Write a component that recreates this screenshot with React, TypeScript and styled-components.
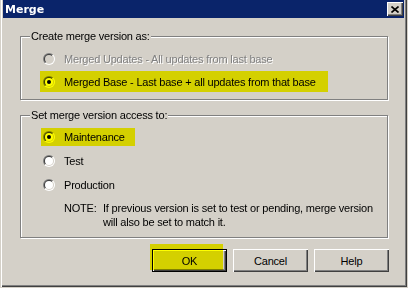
import React from 'react';
import styled, { createGlobalStyle } from 'styled-components';

const face = '#d4d0c8';
const shadow = '#808080';
const darkShadow = '#404040';
const marker = '#d4d000';

const GlobalStyle = createGlobalStyle`
  html, body {
    margin: 0;
    padding: 0;
    background: ${face};
  }
  * {
    box-sizing: border-box;
  }
`;

const Window = styled.div`
  width: 407px;
  height: 287px;
  padding: 0 3px 3px 3px;
  background: ${face};
  box-shadow:
    inset 1px 0 ${face},
    inset 2px 0 #ffffff,
    inset -1px -1px ${darkShadow},
    inset -2px -2px ${shadow};
  font-family: 'Liberation Sans', Arial, sans-serif;
  font-size: 11px;
  letter-spacing: -0.2px;
  color: #000;
  display: flex;
  flex-direction: column;
`;

const TitleBar = styled.div`
  height: 18px;
  background: #0a246a;
  display: flex;
  align-items: center;
  justify-content: space-between;
  padding: 0 1px 0 2px;
`;

const Title = styled.span`
  font-family: 'DejaVu Sans', Tahoma, sans-serif;
  font-weight: bold;
  font-size: 11px;
  letter-spacing: 0;
  color: #ffffff;
`;

const CloseButton = styled.button`
  width: 16px;
  height: 14px;
  padding: 0;
  border: none;
  background: ${face};
  box-shadow:
    inset 1px 1px #ffffff,
    inset -1px -1px ${darkShadow},
    inset -2px -2px ${shadow};
  display: flex;
  align-items: center;
  justify-content: center;
`;

const Content = styled.div`
  display: flex;
  flex-direction: column;
  padding: 18px 0 0 17px;
`;

const GroupBox = styled.div<{ $height: number; $gap: number }>`
  position: relative;
  width: 368px;
  height: ${({ $height }) => $height}px;
  margin-bottom: ${({ $gap }) => $gap}px;
  border: 1px solid ${shadow};
  box-shadow:
    1px 1px 0 #ffffff,
    inset 1px 1px 0 #ffffff;
  display: flex;
  flex-direction: column;
  padding: ${({ $height }) => ($height > 100 ? '9px' : '10px')} 0 0 22px;
`;

const Caption = styled.span`
  position: absolute;
  top: -8px;
  left: 9px;
  padding: 0 1px;
  line-height: 14px;
  background: ${face};
`;

const Row = styled.div<{ $height: number }>`
  height: ${({ $height }) => $height}px;
  display: flex;
  align-items: center;
`;

const Highlight = styled.div<{ $height: number; $left: number; $right: number }>`
  height: ${({ $height }) => $height}px;
  margin-left: -${({ $left }) => $left}px;
  padding: 0 ${({ $right }) => $right}px 0 ${({ $left }) => $left}px;
  background: ${marker};
  display: flex;
  align-items: center;
`;

const RadioRing = styled.span<{ $marked?: boolean }>`
  width: 12px;
  height: 12px;
  border-radius: 50%;
  padding: 1px;
  flex-shrink: 0;
  background: ${({ $marked }) =>
    $marked
      ? 'linear-gradient(135deg, #808000 50%, #ffff00 50%)'
      : `linear-gradient(135deg, ${shadow} 50%, #ffffff 50%)`};
`;

const RadioInner = styled.span<{ $marked?: boolean }>`
  display: block;
  width: 10px;
  height: 10px;
  border-radius: 50%;
  padding: 1px;
  background: ${({ $marked }) =>
    $marked
      ? `linear-gradient(135deg, #404000 50%, ${marker} 50%)`
      : `linear-gradient(135deg, ${darkShadow} 50%, ${face} 50%)`};
`;

const RadioFace = styled.span<{ $marked?: boolean; $disabled?: boolean }>`
  display: flex;
  align-items: center;
  justify-content: center;
  width: 8px;
  height: 8px;
  border-radius: 50%;
  background: ${({ $marked, $disabled }) =>
    $marked ? '#ffff00' : $disabled ? face : '#ffffff'};
`;

const Dot = styled.span`
  width: 4px;
  height: 4px;
  border-radius: 50%;
  background: #000;
`;

const Label = styled.span<{ $disabled?: boolean }>`
  margin-left: 9px;
  white-space: nowrap;
  color: ${({ $disabled }) => ($disabled ? shadow : '#000')};
  text-shadow: ${({ $disabled }) => ($disabled ? '1px 1px 0 #ffffff' : 'none')};
`;

const Note = styled.div`
  margin: 4px 0 0 21px;
  display: grid;
  grid-template-columns: 39px auto;
  line-height: 14px;
  white-space: nowrap;
`;

const ButtonRow = styled.div`
  display: flex;
  justify-content: flex-end;
  gap: 6px;
  padding-right: 15px;
`;

const PushButton = styled.button<{ $default?: boolean }>`
  position: relative;
  width: 75px;
  height: 23px;
  padding: 0;
  font: inherit;
  letter-spacing: inherit;
  color: #000;
  background: ${face};
  border: ${({ $default }) => ($default ? '1px solid #000' : 'none')};
  box-shadow:
    inset 1px 1px #ffffff,
    inset -1px -1px ${darkShadow},
    inset -2px -2px ${shadow};
`;

const ButtonMarker = styled.span`
  position: absolute;
  left: -3px;
  top: -6px;
  width: 73px;
  height: 26px;
  background: #ffff00;
  mix-blend-mode: multiply;
  pointer-events: none;
`;

type RadioProps = { checked?: boolean; disabled?: boolean; marked?: boolean };

const Radio: React.FC<RadioProps> = ({ checked, disabled, marked }) => (
  <RadioRing $marked={marked}>
    <RadioInner $marked={marked}>
      <RadioFace $marked={marked} $disabled={disabled}>
        {checked && <Dot />}
      </RadioFace>
    </RadioInner>
  </RadioRing>
);

const CloseIcon = () => (
  <svg width="8" height="7" viewBox="0 0 8 7">
    <path d="M0.5 0.5 L7.5 6.5 M7.5 0.5 L0.5 6.5" stroke="#000" strokeWidth="1.6" fill="none" />
  </svg>
);

export default function App() {
  return (
    <>
      <GlobalStyle />
      <Window>
        <TitleBar>
          <Title>Merge</Title>
          <CloseButton aria-label="Close">
            <CloseIcon />
          </CloseButton>
        </TitleBar>

        <Content>
          <GroupBox $height={64} $gap={15}>
            <Caption>Create merge version as:</Caption>
            <Row $height={23}>
              <Radio disabled />
              <Label $disabled>Merged Updates - All updates from last base</Label>
            </Row>
            <Row $height={23}>
              <Highlight $height={21} $left={3} $right={12}>
                <Radio checked marked />
                <Label>Merged Base - Last base + all updates from that base</Label>
              </Highlight>
            </Row>
          </GroupBox>

          <GroupBox $height={123} $gap={11}>
            <Caption>Set merge version access to:</Caption>
            <Row $height={24}>
              <Highlight $height={18} $left={2} $right={10}>
                <Radio checked marked />
                <Label>Maintenance</Label>
              </Highlight>
            </Row>
            <Row $height={24}>
              <Radio />
              <Label>Test</Label>
            </Row>
            <Row $height={24}>
              <Radio />
              <Label>Production</Label>
            </Row>
            <Note>
              <span>NOTE:</span>
              <span>
                If previous version is set to test or pending, merge version
                <br />
                will also be set to match it.
              </span>
            </Note>
          </GroupBox>

          <ButtonRow>
            <PushButton $default>
              <ButtonMarker />
              OK
            </PushButton>
            <PushButton>Cancel</PushButton>
            <PushButton>Help</PushButton>
          </ButtonRow>
        </Content>
      </Window>
    </>
  );
}
